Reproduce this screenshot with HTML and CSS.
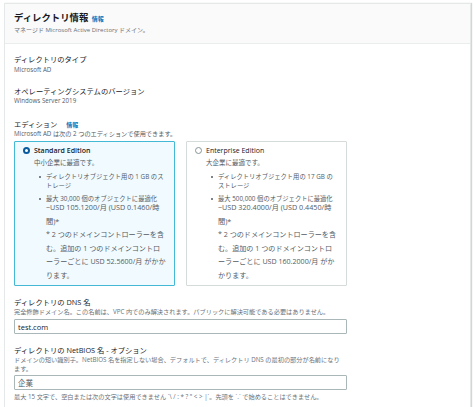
FILE: index.html
```html
<!DOCTYPE html>
<html lang="ja">
<head>
<meta charset="utf-8">
<title>ディレクトリ情報</title>
<link rel="stylesheet" href="styles.css">
</head>
<body>
<div class="panel">
  <div class="panel-header">
    <h2 class="panel-title">ディレクトリ情報 <a class="info-link">情報</a></h2>
    <p class="panel-subtitle">マネージド Microsoft Active Directory ドメイン。</p>
  </div>
  <div class="panel-body">
    <div class="field">
      <div class="field-label">ディレクトリのタイプ</div>
      <div class="field-value">Microsoft AD</div>
    </div>
    <div class="field field-os">
      <div class="field-label">オペレーティングシステムのバージョン</div>
      <div class="field-value">Windows Server 2019</div>
    </div>
    <div class="field field-edition">
      <div class="field-label">エディション<a class="info-link label-info">情報</a></div>
      <div class="field-value">Microsoft AD は次の 2 つのエディションで使用できます。</div>
      <div class="tiles">
        <div class="tile tile-selected">
          <span class="radio radio-on"></span>
          <div class="tile-content">
            <div class="tile-title">Standard Edition</div>
            <div class="tile-desc">中小企業に最適です。</div>
            <div class="tile-details">
              <ul class="tile-list">
                <li>ディレクトリオブジェクト用の 1 GB のストレージ</li>
                <li>最大 30,000 個のオブジェクトに最適化</li>
              </ul>
              <p class="tile-price">~USD 105.1200/月 (USD 0.1460/時間)*</p>
              <p class="tile-note">* 2 つのドメインコントローラーを含む。追加の 1 つのドメインコントローラーごとに USD 52.5600/月 がかかります。</p>
            </div>
          </div>
        </div>
        <div class="tile">
          <span class="radio"></span>
          <div class="tile-content">
            <div class="tile-title tile-title-plain">Enterprise Edition</div>
            <div class="tile-desc">大企業に最適です。</div>
            <div class="tile-details">
              <ul class="tile-list">
                <li>ディレクトリオブジェクト用の 17 GB のストレージ</li>
                <li>最大 500,000 個のオブジェクトに最適化</li>
              </ul>
              <p class="tile-price">~USD 320.4000/月 (USD 0.4450/時間)*</p>
              <p class="tile-note">* 2 つのドメインコントローラーを含む。追加の 1 つのドメインコントローラーごとに USD 160.2000/月 がかかります。</p>
            </div>
          </div>
        </div>
      </div>
    </div>
    <div class="field field-dns">
      <div class="field-label">ディレクトリの DNS 名</div>
      <div class="field-desc">完全修飾ドメイン名。この名前は、VPC 内でのみ解決されます。パブリックに解決可能である必要はありません。</div>
      <input class="text-input" type="text" value="test.com">
    </div>
    <div class="field field-netbios">
      <div class="field-label">ディレクトリの NetBIOS 名 - オプション</div>
      <div class="field-desc field-desc-wide">ドメインの短い識別子。NetBIOS 名を指定しない場合、デフォルトで、ディレクトリ DNS の最初の部分が名前になります。</div>
      <input class="text-input" type="text" placeholder="企業">
      <div class="field-hint">最大 15 文字で、空白または次の文字は使用できません `\ / : * ? " &lt; &gt; |`。先頭を `.` で始めることはできません。</div>
    </div>
  </div>
</div>
</body>
</html>
```

FILE: styles.css
```css
* {
  box-sizing: border-box;
}

html, body {
  margin: 0;
  padding: 0;
  background: #ffffff;
}

body {
  font-family: "Open Sans", "Noto Sans CJK JP", sans-serif;
  color: #16191f;
  overflow: hidden;
}

.panel {
  margin: 3px 0 0 4px;
  width: 467px;
  border: 1px solid #e4e8e8;
  box-shadow: 1px 0 1px rgba(0, 28, 36, 0.18);
  background: #ffffff;
  padding-bottom: 40px;
}

.panel-header {
  background: #fafafa;
  border-bottom: 1px solid #eaeded;
  padding: 7px 9px 8px;
}

.panel-title {
  margin: 0;
  font-size: 9.4px;
  line-height: 13px;
  font-weight: 700;
  color: #16191f;
}

.info-link {
  font-size: 6px;
  line-height: 1;
  font-weight: 700;
  color: #0073bb;
  margin-left: 1px;
}

.panel-subtitle {
  margin: 2px 0 0;
  font-size: 6px;
  line-height: 9px;
  color: #687078;
}

.panel-body {
  padding: 10px 9px 0;
}

.field-label {
  font-size: 7.3px;
  line-height: 10px;
  color: #16191f;
}

.label-info {
  margin-left: 9px;
}

.field-value {
  margin-top: 0.5px;
  font-size: 6.2px;
  line-height: 9px;
  color: #545b64;
}

.field-os {
  margin-top: 12px;
}

.field-edition {
  margin-top: 14px;
}

.field-edition .field-value {
  margin-top: 0;
}

.tiles {
  display: grid;
  grid-template-columns: 161px 161px;
  column-gap: 11px;
  margin-top: 3px;
}

.tile {
  display: flex;
  gap: 4px;
  border: 1px solid #d5dbdb;
  border-radius: 1px;
  padding: 3px 8px 2px 8px;
  background: #ffffff;
}

.tile-selected {
  border-color: #44b9d6;
  background: #f1faff;
}

.radio {
  flex: none;
  width: 7px;
  height: 7px;
  margin-top: 2px;
  border-radius: 50%;
  border: 1px solid #879596;
  background: #ffffff;
}

.radio-on {
  border: 2.2px solid #0a5a9e;
}

.tile-content {
  flex: 1;
  min-width: 0;
}

.tile-title {
  font-size: 7px;
  line-height: 11px;
  font-weight: 600;
  color: #16191f;
}

.tile-title-plain {
  font-weight: 400;
}

.tile-desc {
  margin-top: 1px;
  font-size: 6.5px;
  line-height: 11px;
  color: #545b64;
}

.tile-details {
  padding-left: 12px;
}

.tile-list {
  margin: 4px 0 0;
  padding: 0;
  list-style: none;
}

.tile-list li {
  position: relative;
  font-size: 6.3px;
  line-height: 9px;
  color: #545b64;
}

.tile-list li + li {
  margin-top: 4px;
}

.tile-list li::before {
  content: "";
  position: absolute;
  left: -7px;
  top: 3.5px;
  width: 2px;
  height: 2px;
  border-radius: 50%;
  background: #545b64;
}

.tile-price {
  margin: -2px 0 0;
  font-size: 7.2px;
  line-height: 13.6px;
  color: #545b64;
}

.tile-note {
  margin: 0;
  font-size: 7.1px;
  line-height: 13.6px;
  color: #545b64;
}

.field-dns {
  margin-top: 11.5px;
}

.field-desc {
  max-width: 324px;
  font-size: 6.2px;
  line-height: 9px;
  color: #687078;
}

.field-desc-wide {
  max-width: 330px;
}

.text-input {
  display: block;
  width: 333px;
  height: 15px;
  margin-top: 3px;
  padding: 0 3px;
  border: 1px solid #aab7b8;
  border-radius: 1px;
  font-family: "Open Sans", "Noto Sans CJK JP", sans-serif;
  font-size: 7.5px;
  line-height: 13px;
  color: #16191f;
  background: #ffffff;
  outline: none;
}

.text-input::placeholder {
  color: #545b64;
  opacity: 1;
}

.field-netbios {
  margin-top: 11px;
}

.field-netbios .text-input {
  margin-top: 2px;
}

.field-hint {
  margin-top: 2px;
  font-size: 6.2px;
  line-height: 9px;
  color: #687078;
  white-space: nowrap;
}
```
